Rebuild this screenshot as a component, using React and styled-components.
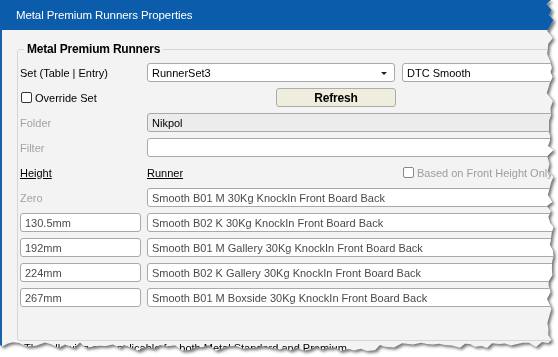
import React from "react";
import styled, { createGlobalStyle } from "styled-components";

const GlobalStyle = createGlobalStyle`
  html, body {
    margin: 0;
    padding: 0;
    background: #ffffff;
    overflow: hidden;
  }
  body {
    font-family: "Liberation Sans", Arial, sans-serif;
    font-size: 11px;
  }
`;

// torn paper edge along the right and bottom of the capture
const seeded = (seed) => () => {
  seed = (seed * 16807) % 2147483647;
  return (seed - 1) / 2147483646;
};

const buildTornEdge = () => {
  const rnd = seeded(42);
  const pts = ["0px 0px", "551px 0px"];
  for (let y = 4; y < 342; y += 4 + Math.round(rnd() * 4)) {
    const x = 550 + (rnd() - 0.5) * 7;
    pts.push(`${x.toFixed(1)}px ${y}px`);
  }
  pts.push("548px 343px");
  for (let x = 542; x > 0; x -= 4 + Math.round(rnd() * 5)) {
    const base = x < 120 ? 345 : x < 380 ? 348 : 345;
    const y = base + (rnd() - 0.5) * 6;
    pts.push(`${x}px ${y.toFixed(1)}px`);
  }
  pts.push("0px 345px");
  return `polygon(${pts.join(", ")})`;
};

const tornEdge = buildTornEdge();

const Shadow = styled.div`
  filter: drop-shadow(2px 2px 1.5px rgba(0, 0, 0, 0.55));
`;

const Window = styled.div`
  width: 620px;
  height: 360px;
  background: #f3f3f3;
  overflow: hidden;
  clip-path: ${({ $clip }) => $clip};
  display: flex;
  flex-direction: column;
`;

const TitleBar = styled.div`
  height: 30px;
  flex: none;
  background: #0b5cab;
  color: #ffffff;
  display: flex;
  align-items: center;
  padding-left: 16px;
  font-size: 11.5px;
  letter-spacing: -0.1px;
`;

const Body = styled.div`
  flex: 1;
  border-left: 2px solid #1a62ad;
  padding: 11px 0 0 15px;
  display: flex;
  flex-direction: column;
`;

const Group = styled.fieldset`
  margin: 0;
  width: 600px;
  border: 1px solid #d6d6d6;
  border-radius: 3px;
  padding: 6px 0 0 2px;
  height: 300px;
  box-sizing: border-box;
`;

const Legend = styled.legend`
  font-weight: bold;
  font-size: 12px;
  letter-spacing: -0.2px;
  padding: 0 3px;
  margin-left: 4px;
  line-height: 16px;
  color: #000;
`;

const Grid = styled.div`
  display: grid;
  grid-template-columns: 127px 248px 1fr;
  grid-auto-rows: 19px;
  row-gap: 6px;
  align-items: center;
`;

const Label = styled.div`
  color: ${({ $muted }) => ($muted ? "#a3a3a3" : "#000")};
  text-decoration: ${({ $underline }) => ($underline ? "underline" : "none")};
  white-space: nowrap;
`;

const Field = styled.div`
  grid-column: ${({ $span }) => $span || "auto"};
  height: 19px;
  box-sizing: border-box;
  border: 1px solid #a9a9a9;
  border-radius: 3px;
  background: ${({ $disabled }) => ($disabled ? "#ececec" : "#ffffff")};
  color: #000;
  display: flex;
  align-items: center;
  padding-left: 4px;
  margin-left: ${({ $offset }) => $offset || 0}px;
  width: ${({ $width }) => ($width ? `${$width}px` : "auto")};
  white-space: nowrap;
  overflow: hidden;
  position: relative;
`;

const RunnerField = styled(Field)`
  color: #4a4a4a;
`;

const Arrow = styled.span`
  position: absolute;
  right: 7px;
  top: 8px;
  width: 0;
  height: 0;
  border-left: 3px solid transparent;
  border-right: 3px solid transparent;
  border-top: 3px solid #222;
`;

const CheckRow = styled.label`
  display: flex;
  align-items: center;
  gap: 3px;
  color: ${({ $muted }) => ($muted ? "#9d9d9d" : "#000")};
  margin-left: ${({ $offset }) => $offset || 0}px;
  white-space: nowrap;
`;

const Box = styled.span`
  width: 11px;
  height: 11px;
  box-sizing: border-box;
  border: 1px solid ${({ $muted }) => ($muted ? "#888" : "#333")};
  border-radius: 2px;
  background: #fff;
  flex: none;
`;

const Button = styled.button`
  justify-self: end;
  width: 120px;
  height: 19px;
  margin-right: -1px;
  border: 1px solid #acacac;
  border-radius: 3px;
  background: #efeddd;
  font-family: inherit;
  font-size: 12px;
  letter-spacing: -0.2px;
  font-weight: bold;
  color: #000;
  padding: 0;
`;

const Note = styled.div`
  margin: 35px 0 0 4px;
  white-space: nowrap;
  color: #000;
`;

const rows = [
  { height: null, runner: "Smooth B01 M 30Kg KnockIn Front Board Back" },
  { height: "130.5mm", runner: "Smooth B02 K 30Kg KnockIn Front Board Back" },
  { height: "192mm", runner: "Smooth B01 M Gallery 30Kg KnockIn Front Board Back" },
  { height: "224mm", runner: "Smooth B02 K Gallery 30Kg KnockIn Front Board Back" },
  { height: "267mm", runner: "Smooth B01 M Boxside 30Kg KnockIn Front Board Back" },
];

export default function App() {
  return (
    <>
      <GlobalStyle />
      <Shadow>
        <Window $clip={tornEdge}>
          <TitleBar>Metal Premium Runners Properties</TitleBar>
          <Body>
            <Group>
              <Legend>Metal Premium Runners</Legend>
              <Grid>
                <Label>Set (Table | Entry)</Label>
                <Field>
                  RunnerSet3
                  <Arrow />
                </Field>
                <Field $offset={7}>DTC Smooth</Field>

                <CheckRow $offset={1}>
                  <Box />
                  Override Set
                </CheckRow>
                <Button>Refresh</Button>
                <div />

                <Label $muted>Folder</Label>
                <Field $span="2 / 4" $disabled>Nikpol</Field>

                <Label $muted>Filter</Label>
                <Field $span="2 / 4" />

                <Label $underline>Height</Label>
                <Label $underline>Runner</Label>
                <CheckRow $muted $offset={8}>
                  <Box $muted />
                  Based on Front Height Only
                </CheckRow>

                {rows.map((r) => (
                  <React.Fragment key={r.runner + r.height}>
                    {r.height ? (
                      <RunnerField $width={121}>{r.height}</RunnerField>
                    ) : (
                      <Label $muted>Zero</Label>
                    )}
                    <RunnerField $span="2 / 4">{r.runner}</RunnerField>
                  </React.Fragment>
                ))}
              </Grid>
              <Note>The following are applicable for both Metal Standard and Premium</Note>
            </Group>
          </Body>
        </Window>
      </Shadow>
    </>
  );
}
